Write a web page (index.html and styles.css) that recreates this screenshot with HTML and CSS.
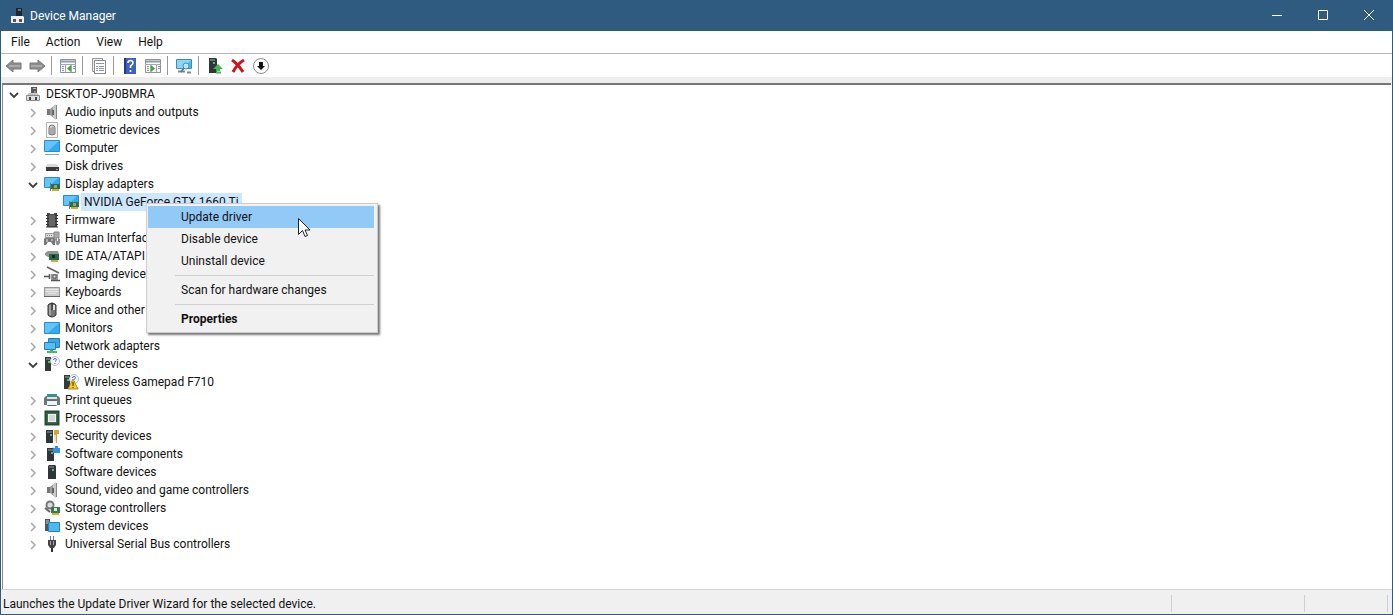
FILE: index.html
```
<!DOCTYPE html>
<html lang="en">
<head>
    <meta charset="UTF-8">
    <meta name="viewport" content="width=device-width, initial-scale=1.0">
    <title>Device Manager</title>
    <link rel="stylesheet" href="styles.css">
</head>
<body>
    <!-- Shared icons -->
    <svg class="sprite" aria-hidden="true">
        <symbol id="closed" viewBox="0 0 12 12"><path d="M4 2l4 4-4 4" fill="none" stroke="#a6a6a6" stroke-width="1.5"/></symbol>
        <symbol id="open" viewBox="0 0 12 12"><path d="M2 4l4 4 4-4" fill="none" stroke="#404040" stroke-width="1.8"/></symbol>
        <symbol id="pc" viewBox="0 0 16 16">
            <path d="M6 1h6v9H6z" fill="#55595b"/><path d="M8 2h3v1H8z" fill="#bbb"/><path d="M9 5h2v2H9z" fill="#74a080"/>
            <path d="M2 9l2-2h8l2 2v6H2z" fill="#c4c4c4"/><path d="M1.500 9.500h13v5h-13z" fill="#ddd" stroke="#8a8a8a"/><path d="M4 11h2v3H4zM10 11h2v3h-2z" fill="#444"/>
        </symbol>
        <symbol id="speaker" viewBox="0 0 16 16">
            <path d="M3 5h3v6H3z" fill="#777"/><path d="M6 5l5-4v14l-5-4z" fill="#9b9b9b"/><path d="M9 3l3-3v16l-3-3z" fill="#c9c9c9"/><path d="M8 6h2v5H8z" fill="#666"/>
            <path d="M12.500 1v14" stroke="#888"/>
        </symbol>
        <symbol id="finger" viewBox="0 0 16 16">
            <path d="M2.500.5h11v15h-11z" fill="#f7f7f7" stroke="#b5b5b5"/>
            <path d="M5 12V6q0-3 3-3t3 3v6q-3 2-6 0z" fill="#ccc" stroke="#777"/><path d="M7 6v6M9 5v7" stroke="#888"/>
        </symbol>
        <symbol id="screen" viewBox="0 0 16 16">
            <path d="M.5 2.500h15v11H.5z" fill="#36aaf0" stroke="#2b8bd0"/><path d="M1 3h14L4 13H1z" fill="#62c4fa"/>
        </symbol>
        <symbol id="computer" viewBox="0 0 16 16">
            <path d="M.5.5h15v11H.5z" fill="#36aaf0" stroke="#2b8bd0"/><path d="M1 1h14L4 11H1z" fill="#62c4fa"/><path d="M1 14.500h14" stroke="#74a5d0"/>
        </symbol>
        <symbol id="disk" viewBox="0 0 16 16">
            <path d="M3 6h10l2 4H1z" fill="#dadada"/><path d="M2 9h13v4H2z" fill="#3a3a3a"/><path d="M12 11h2v1h-2z" fill="#79b86b"/>
        </symbol>
        <symbol id="display" viewBox="0 0 16 16">
            <path d="M.5 1.500h15v10H.5z" fill="#36aaf0" stroke="#2b8bd0"/><path d="M1 2h13L5 11H1z" fill="#62c4fa"/>
            <path d="M7 8h9v5H7z" fill="#287346"/><path d="M8 13h7v2H8z" fill="#d1ad31"/><path d="M10 9h3v3h-3z" fill="#9aa37a"/><path d="M6.500 7v8" stroke="#777"/>
        </symbol>
        <symbol id="chip" viewBox="0 0 16 16">
            <path d="M3 1h3v1h4V1h3v14H3z" fill="#4a4a4a"/><path d="M2 3.500h12M2 6.500h12M2 9.500h12M2 12.500h12M2 15h12" stroke="#333"/><path d="M5 3h6v11H5z" fill="#666"/>
        </symbol>
        <symbol id="hid" viewBox="0 0 16 16">
            <path d="M1.500 3.500h9v4h-9z" fill="#ddd" stroke="#999"/><path d="M10 2h5v6h-5z" fill="#aaa" stroke="#888"/><path d="M3 5.500h6" stroke="#888" stroke-dasharray="1 1"/>
            <path d="M0 15V9q1-2 3-1h5q2-1 3 1v6H9l-2-3H4l-2 3z" fill="#777"/><path d="M11 9q2-3 5 0v4q-2 4-4 1z" fill="#8d8d8d"/><path d="M3 9v3M7 10h2M13.500 8v3" stroke="#eee"/>
        </symbol>
        <symbol id="ide" viewBox="0 0 16 16">
            <path d="M1 5l3-2h10l1 3v3H4L1 7z" fill="#8e9593"/><path d="M5 6h10v6H5z" fill="#28684b"/><path d="M7 12h7v2H7z" fill="#c6af53"/><path d="M8 7h3v3H8z" fill="#222"/>
        </symbol>
        <symbol id="imaging" viewBox="0 0 16 16">
            <path d="M3 1l12 6" stroke="#666" stroke-width="1.800"/><path d="M7 8h7v6H7z" fill="#999"/><path d="M0 10.500h6M5.500 8v5M7 14.500h9" stroke="#555" stroke-width="1.500"/>
            <path d="M9 9h3v3H9z" fill="#eee" stroke="#555"/>
        </symbol>
        <symbol id="keyboard" viewBox="0 0 16 16">
            <path d="M.5 3.500h15v9H.5z" fill="#ccc" stroke="#959595"/><path d="M2 5.500h12M2 7.500h12M4 9.500h8" stroke="#e6e6e6"/><path d="M0 12.500h16" stroke="#666"/>
        </symbol>
        <symbol id="mouse" viewBox="0 0 16 16">
            <path d="M4 3q4-4 8 0v10q-4 4-8 0z" fill="#777" stroke="#333"/><path d="M6 3v10" stroke="#ccc"/><path d="M8 1v7" stroke="#222"/><path d="M9 3h2v5H9z" fill="#ddd"/>
        </symbol>
        <symbol id="network" viewBox="0 0 16 16">
            <path d="M4.500.5h11v9h-11z" fill="#3ba6e8" stroke="#247dba"/><path d="M.5 4.500h11v7H.5z" fill="#55bff5" stroke="#287eb8"/>
            <path d="M6 12h3v1h4v2H3v-2h3z" fill="#45b96c"/>
        </symbol>
        <symbol id="tower" viewBox="0 0 16 16">
            <path d="M5 1h6l1 1v13H4V2z" fill="#303638"/><path d="M5 3h5" stroke="#929999"/><path d="M8 5h2v2H8z" fill="#55bd70"/>
        </symbol>
        <symbol id="unknown" viewBox="0 0 16 16">
            <path d="M1 1h6v14H1z" fill="#333a3b"/><path d="M2 3h4" stroke="#aaa"/><path d="M4 5h2v2H4z" fill="#55bd70"/>
            <circle cx="11" cy="5" r="4.500" fill="#f3f6fa" stroke="#b7c2ce"/><path d="M9.500 4q0-1.500 1.500-1.500t1.500 1.200q0 .8-1.500 1.800M11 7v1" fill="none" stroke="#3f6ea9"/>
        </symbol>
        <symbol id="printer" viewBox="0 0 16 16">
            <path d="M3 2h10v4H3z" fill="#28989e"/><path d="M0 6l2-2h12l2 2v7h-3V9H3v4H0z" fill="#6b7779"/><path d="M3 8h10v6H3z" fill="#eef3f3"/><path d="M3 5h10v2H3z" fill="#cfe8e8"/><path d="M3 8.500h10M3.500 13.500h9" stroke="#667"/>
        </symbol>
        <symbol id="cpu" viewBox="0 0 16 16">
            <path d="M1.500 1.500h13v13h-13z" fill="#416c53" stroke="#244b35" stroke-width="2"/><path d="M4 4h8v8H4z" fill="#f0f3f0"/><path d="M5 5h6v6H5z" fill="#d2d8d3"/>
        </symbol>
        <symbol id="usb" viewBox="0 0 16 16">
            <path d="M6.500 0v5M9.500 0v5" stroke="#777"/><path d="M4 4h8v5l-2 3H6L4 9z" fill="#444"/><path d="M6 5h1v4H6zM9 5h1v4H9z" fill="#aaa"/><path d="M8 12v4" stroke="#333" stroke-width="2"/>
        </symbol>
        <symbol id="panel" viewBox="0 0 18 16">
            <path d="M1.500 1.500h15v13h-15z" fill="#fafafa" stroke="#8d939a"/><path d="M2 3.500h14" stroke="#8d9aa7" stroke-width="2"/><path d="M1 6.500h16M6.500 6v8M12.500 6v8" stroke="#a4a9af"/>
            <path d="M3 8.500h2M3 10.500h2M3 12.500h2M14 8.500h2M14 10.500h2" stroke="#88929c"/>
        </symbol>
    </svg>

    <div class="window">
        <header class="titlebar">
            <svg class="icon" viewBox="0 0 16 16"><path d="M7 0h6v9H7z" fill="#20272c"/><path d="M9 2h3" stroke="#b4c1cc"/><path d="M2 8h12l1 1v6H2z" fill="#eee"/><path d="M4 11h3v3H4zM10 11h3v3h-3z" fill="#555"/></svg>
            <h1>Device Manager</h1>
            <div class="window-buttons">
                <button aria-label="Minimize"><svg viewBox="0 0 12 12"><path d="M1 5.500h10"/></svg></button>
                <button aria-label="Maximize"><svg viewBox="0 0 12 12"><path d="M1.500.5h9v9h-9z"/></svg></button>
                <button aria-label="Close"><svg viewBox="0 0 12 12"><path d="M1 0l10 10M11 0L1 10"/></svg></button>
            </div>
        </header>

        <nav class="menubar">
            <button>File</button>
            <button>Action</button>
            <button>View</button>
            <button>Help</button>
        </nav>

        <div class="toolbar" role="toolbar">
            <button aria-label="Back"><svg viewBox="0 0 18 16"><path d="M1 8l7-6v3h8v6H8v3z" fill="#8c8c8c" stroke="#7c7c7c"/><path d="M4 8h11" stroke="#aaa" stroke-width="2"/></svg></button>
            <button aria-label="Forward"><svg viewBox="0 0 18 16"><path d="M17 8l-7-6v3H2v6h8v3z" fill="#8c8c8c" stroke="#7c7c7c"/><path d="M3 8h11" stroke="#aaa" stroke-width="2"/></svg></button>
            <span class="divider"></span>
            <button aria-label="Show or hide console tree"><svg viewBox="0 0 18 16"><use href="#panel"/><path d="M12 7v7l-4-3.500z" fill="#48a33c"/></svg></button>
            <span class="divider"></span>
            <button aria-label="Properties"><svg viewBox="0 0 18 16"><path d="M2.500.5h10v13h-10z" fill="#eee" stroke="#999"/><path d="M4.500 2.500h11v13h-11z" fill="#fff" stroke="#858b91"/><path d="M6 5.500h8M6 8.500h2M9 8.500h5M6 10.500h2M9 10.500h5M6 12.500h2M9 12.500h5" stroke="#8b949e"/></svg></button>
            <span class="divider"></span>
            <button aria-label="Help"><svg viewBox="0 0 18 16"><path d="M3 0h12v16H3z" fill="#3f5fc4"/><path d="M3 0h2v16H3z" fill="#223986"/><path d="M7 5q0-2.500 2.500-2.500T12 5q0 1.200-2.500 3v2M9.500 12v2" fill="none" stroke="#fff" stroke-width="1.600"/></svg></button>
            <button aria-label="Show or hide action pane"><svg viewBox="0 0 18 16"><use href="#panel"/><path d="M7 7v7l4-3.500z" fill="#48a33c"/></svg></button>
            <span class="divider"></span>
            <button aria-label="Scan for hardware changes"><svg viewBox="0 0 18 16"><path d="M1.500 1.500h15v9h-15z" fill="#4db9ec" stroke="#438bb1"/><path d="M2 2h14l-8 8H2z" fill="#89d6f5"/><path d="M3 13.500h7M12 14.500h4" stroke="#808a91" stroke-width="2"/><circle cx="11" cy="8" r="3" fill="#b8e6fa" stroke="#478fb4"/><path d="M9 10l-3 4" stroke="#5f7484" stroke-width="1.500"/></svg></button>
            <span class="divider"></span>
            <button aria-label="Update driver"><svg viewBox="0 0 18 16"><path d="M3 0h7l1 1v14H3z" fill="#303638"/><path d="M4 2h5" stroke="#aaa"/><path d="M7 4h2v2H7z" fill="#55bd70"/><path d="M12 6l5 5h-3v2h-4v-2H7z" fill="#43b650"/><path d="M10 14.500h5" stroke="#43b650" stroke-width="2"/></svg></button>
            <button aria-label="Uninstall device"><svg viewBox="0 0 18 16"><path d="M3 2q6 4 11 12M15 2q-7 4-11 12" fill="none" stroke="#cd1420" stroke-width="3"/></svg></button>
            <button aria-label="Disable device"><svg viewBox="0 0 18 16"><circle cx="9" cy="8" r="7.500" fill="#fff" stroke="#8b8b8b"/><path d="M7 4h4v4h2l-4 4-4-4h2z" fill="#111"/></svg></button>
        </div>

        <main class="tree-pane">
            <ul class="tree" role="tree">
                <li role="treeitem" aria-expanded="true">
                    <div class="row"><button class="toggle" aria-label="Collapse"><svg><use href="#open"/></svg></button><svg class="icon"><use href="#pc"/></svg><span class="label">DESKTOP-J90BMRA</span></div>
                    <ul role="group">
                        <li role="treeitem"><div class="row"><button class="toggle" aria-label="Expand"><svg><use href="#closed"/></svg></button><svg class="icon"><use href="#speaker"/></svg><span class="label">Audio inputs and outputs</span></div></li>
                        <li role="treeitem"><div class="row"><button class="toggle" aria-label="Expand"><svg><use href="#closed"/></svg></button><svg class="icon"><use href="#finger"/></svg><span class="label">Biometric devices</span></div></li>
                        <li role="treeitem"><div class="row"><button class="toggle" aria-label="Expand"><svg><use href="#closed"/></svg></button><svg class="icon"><use href="#computer"/></svg><span class="label">Computer</span></div></li>
                        <li role="treeitem"><div class="row"><button class="toggle" aria-label="Expand"><svg><use href="#closed"/></svg></button><svg class="icon"><use href="#disk"/></svg><span class="label">Disk drives</span></div></li>
                        <li role="treeitem" aria-expanded="true">
                            <div class="row"><button class="toggle" aria-label="Collapse"><svg><use href="#open"/></svg></button><svg class="icon"><use href="#display"/></svg><span class="label">Display adapters</span></div>
                            <ul role="group">
                                <li role="treeitem" class="has-menu" aria-selected="true">
                                    <div class="row leaf"><svg class="icon"><use href="#display"/></svg><span class="label selected">NVIDIA GeForce GTX 1660 Ti</span></div>
                                    <div class="context-menu" role="menu">
                                        <button class="active" role="menuitem">Update driver</button>
                                        <button role="menuitem">Disable device</button>
                                        <button role="menuitem">Uninstall device</button>
                                        <hr>
                                        <button role="menuitem">Scan for hardware changes</button>
                                        <hr>
                                        <button class="default" role="menuitem">Properties</button>
                                        <svg class="pointer" viewBox="0 0 12 20"><path d="M.5.5v16l4-4 2.500 6 2.500-1-2.500-5.500h5z" fill="#fff" stroke="#222"/></svg>
                                    </div>
                                </li>
                            </ul>
                        </li>
                        <li role="treeitem"><div class="row"><button class="toggle" aria-label="Expand"><svg><use href="#closed"/></svg></button><svg class="icon"><use href="#chip"/></svg><span class="label">Firmware</span></div></li>
                        <li role="treeitem"><div class="row"><button class="toggle" aria-label="Expand"><svg><use href="#closed"/></svg></button><svg class="icon"><use href="#hid"/></svg><span class="label">Human Interface Devices</span></div></li>
                        <li role="treeitem"><div class="row"><button class="toggle" aria-label="Expand"><svg><use href="#closed"/></svg></button><svg class="icon"><use href="#ide"/></svg><span class="label">IDE ATA/ATAPI controllers</span></div></li>
                        <li role="treeitem"><div class="row"><button class="toggle" aria-label="Expand"><svg><use href="#closed"/></svg></button><svg class="icon"><use href="#imaging"/></svg><span class="label">Imaging devices</span></div></li>
                        <li role="treeitem"><div class="row"><button class="toggle" aria-label="Expand"><svg><use href="#closed"/></svg></button><svg class="icon"><use href="#keyboard"/></svg><span class="label">Keyboards</span></div></li>
                        <li role="treeitem"><div class="row"><button class="toggle" aria-label="Expand"><svg><use href="#closed"/></svg></button><svg class="icon"><use href="#mouse"/></svg><span class="label">Mice and other pointing devices</span></div></li>
                        <li role="treeitem"><div class="row"><button class="toggle" aria-label="Expand"><svg><use href="#closed"/></svg></button><svg class="icon"><use href="#screen"/></svg><span class="label">Monitors</span></div></li>
                        <li role="treeitem"><div class="row"><button class="toggle" aria-label="Expand"><svg><use href="#closed"/></svg></button><svg class="icon"><use href="#network"/></svg><span class="label">Network adapters</span></div></li>
                        <li role="treeitem" aria-expanded="true">
                            <div class="row"><button class="toggle" aria-label="Collapse"><svg><use href="#open"/></svg></button><svg class="icon"><use href="#unknown"/></svg><span class="label">Other devices</span></div>
                            <ul role="group">
                                <li role="treeitem"><div class="row leaf"><svg class="icon" viewBox="0 0 16 16"><use href="#unknown"/><path d="M10 5l5 10H5z" fill="#ffc928" stroke="#b88714"/><path d="M10 8v4M10 13v1" stroke="#222"/></svg><span class="label">Wireless Gamepad F710</span></div></li>
                            </ul>
                        </li>
                        <li role="treeitem"><div class="row"><button class="toggle" aria-label="Expand"><svg><use href="#closed"/></svg></button><svg class="icon"><use href="#printer"/></svg><span class="label">Print queues</span></div></li>
                        <li role="treeitem"><div class="row"><button class="toggle" aria-label="Expand"><svg><use href="#closed"/></svg></button><svg class="icon"><use href="#cpu"/></svg><span class="label">Processors</span></div></li>
                        <li role="treeitem"><div class="row"><button class="toggle" aria-label="Expand"><svg><use href="#closed"/></svg></button><svg class="icon" viewBox="0 0 16 16"><path d="M2 2h7v13H2z" fill="#303638"/><path d="M3 4h5" stroke="#999"/><path d="M6 6h2v2H6z" fill="#55bd70"/><path d="M10 2h5v4h-2v9h-1V7h-2z" fill="#d6a13b"/><path d="M11 7v6" stroke="#e3bd6c"/></svg><span class="label">Security devices</span></div></li>
                        <li role="treeitem"><div class="row"><button class="toggle" aria-label="Expand"><svg><use href="#closed"/></svg></button><svg class="icon" viewBox="0 0 16 16"><path d="M3 2h7v13H3z" fill="#303638"/><path d="M4 4h5" stroke="#999"/><path d="M7 6h2v2H7z" fill="#55bd70"/><path d="M9 2h2V0h3v2h2v5H9z" fill="#3490e1"/></svg><span class="label">Software components</span></div></li>
                        <li role="treeitem"><div class="row"><button class="toggle" aria-label="Expand"><svg><use href="#closed"/></svg></button><svg class="icon"><use href="#tower"/></svg><span class="label">Software devices</span></div></li>
                        <li role="treeitem"><div class="row"><button class="toggle" aria-label="Expand"><svg><use href="#closed"/></svg></button><svg class="icon"><use href="#speaker"/></svg><span class="label">Sound, video and game controllers</span></div></li>
                        <li role="treeitem"><div class="row"><button class="toggle" aria-label="Expand"><svg><use href="#closed"/></svg></button><svg class="icon" viewBox="0 0 16 16"><circle cx="6" cy="5" r="3.500" fill="#ddd" stroke="#777" stroke-width="2"/><path d="M1 8l5 4" stroke="#666" stroke-width="2"/><path d="M7 7h9v6H7z" fill="#357b4f"/><path d="M8 13h7v2H8z" fill="#d5ae32"/><path d="M10 8h3v3h-3z" fill="#dfe7df"/></svg><span class="label">Storage controllers</span></div></li>
                        <li role="treeitem"><div class="row"><button class="toggle" aria-label="Expand"><svg><use href="#closed"/></svg></button><svg class="icon" viewBox="0 0 16 16"><path d="M1 1h5v12H1z" fill="#4b5962"/><path d="M2 3h3M2 5h3" stroke="#ccc"/><path d="M4.500 4.500h11v9h-11z" fill="#4bbaf1" stroke="#2681bd"/></svg><span class="label">System devices</span></div></li>
                        <li role="treeitem"><div class="row"><button class="toggle" aria-label="Expand"><svg><use href="#closed"/></svg></button><svg class="icon"><use href="#usb"/></svg><span class="label">Universal Serial Bus controllers</span></div></li>
                    </ul>
                </li>
            </ul>
        </main>

        <footer class="statusbar">
            <span class="message">Launches the Update Driver Wizard for the selected device.</span>
            <span class="cell"></span>
            <span class="cell small"></span>
        </footer>
    </div>
</body>
</html>
```

FILE: styles.css
```
* {
    box-sizing: border-box;
}
body {
    margin: 0;
    font-family: Roboto, "Open Sans", sans-serif;
    font-size: 12px;
    line-height: 18px;
    color: #111111;
}
button {
    padding: 0;
    border: none;
    background: none;
    font: inherit;
    color: inherit;
}
svg {
    display: block;
    flex-shrink: 0;
}
.sprite {
    display: none;
}
.icon {
    width: 16px;
    height: 16px;
}
.window {
    min-height: 100vh;
    display: flex;
    flex-direction: column;
    border: 1px solid #2f5b80;
    border-top: none;
    background-color: #ffffff;
}

/* Title bar */
.titlebar {
    height: 31px;
    padding-left: 8px;
    display: flex;
    align-items: center;
    gap: 5px;
    background-color: #2f5b80;
    color: #ffffff;
}
.titlebar h1 {
    margin: 0;
    font-size: 12px;
    font-weight: normal;
}
.window-buttons {
    margin-left: auto;
    display: flex;
}
.window-buttons button {
    width: 46px;
    height: 31px;
    display: flex;
    align-items: center;
    justify-content: center;
}
.window-buttons svg {
    width: 12px;
    height: 12px;
    fill: none;
    stroke: #ffffff;
}

/* Menu and toolbar */
.menubar {
    height: 23px;
    padding-left: 2px;
    display: flex;
    align-items: center;
    border-bottom: 1px solid #b8b8b8;
}
.menubar button {
    padding: 0 8px;
}
.toolbar {
    height: 31px;
    padding: 2px 0 0 1px;
    display: flex;
    border-bottom: 8px solid #eeeeee;
}
.toolbar button {
    width: 23px;
    height: 20px;
    display: flex;
    align-items: center;
    justify-content: center;
}
.toolbar svg {
    width: 18px;
    height: 16px;
}
.divider {
    width: 1px;
    height: 19px;
    margin: 0 4px 0 3px;
    background-color: #999999;
}

/* Device tree */
.tree-pane {
    flex-grow: 1;
    margin: -2px 1px 0;
    padding-left: 2px;
    border-top: 2px solid #777777;
    border-left: 1px solid #8d8d8d;
}
.tree, .tree ul {
    margin: 0;
    padding: 0;
    list-style: none;
}
.tree ul {
    padding-left: 19px;
}
.row {
    height: 18px;
    display: flex;
    align-items: center;
    white-space: nowrap;
}
.leaf {
    padding-left: 19px;
}
.toggle {
    width: 19px;
    height: 18px;
    padding: 2px 2px 0 0;
    display: flex;
    align-items: center;
    justify-content: center;
}
.toggle svg {
    width: 12px;
    height: 12px;
}
.row .icon {
    margin: 0 2px 0 1px;
}
.label {
    padding: 0 3px;
}
.selected {
    background-color: #cce8ff;
}

/* Context menu */
.has-menu {
    position: relative;
}
.context-menu {
    position: absolute;
    top: 10px;
    left: 103px;
    z-index: 1;
    width: 232px;
    padding: 2px 3px 2px 1px;
    border: 1px solid #cccccc;
    background-color: #f1f1f1;
    box-shadow: 2px 2px 2px #777777;
}
.context-menu button {
    width: 100%;
    height: 22px;
    padding-left: 33px;
    display: block;
    text-align: left;
}
.context-menu .active {
    background-color: #91c9f7;
}
.context-menu .default {
    font-weight: bold;
}
.context-menu hr {
    margin: 3px 0 3px 27px;
    border: none;
    border-top: 1px solid #cfcfcf;
}
.pointer {
    position: absolute;
    top: 14px;
    left: 151px;
    width: 12px;
    height: 20px;
}

/* Status bar */
.statusbar {
    height: 25px;
    padding: 5px 4px 2px 2px;
    display: flex;
    border-top: 1px solid #d5d5d5;
    background-color: #f0f0f0;
}
.message {
    flex-grow: 1;
}
.cell {
    width: 133px;
    border-left: 1px solid #d0d0d0;
}
.small {
    width: 84px;
    border-right: 1px solid #d0d0d0;
}
```
